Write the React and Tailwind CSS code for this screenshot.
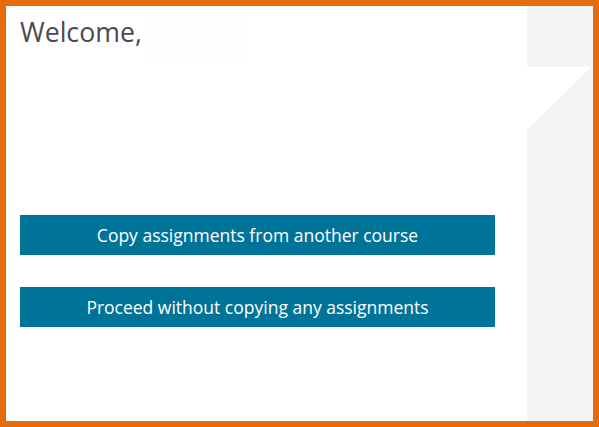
export default function App() {
    return (
        <div className="w-[599px] h-[427px] border-[6px] border-[#e46c0a] bg-white flex font-['Open_Sans',sans-serif]">

            {/* MAIN */}
            <div className="flex-1 pl-[14px] pt-[9px]">
                <div className="flex items-start">
                    <h1 className="text-[26.7px] leading-[33px] text-[#4a4a50]">
                        Welcome,
                    </h1>
                    {/* redacted name */}
                    <div className="ml-[4px] mt-[1px] w-[95px] h-[47px] bg-[#fdfdfd]"></div>
                </div>

                <div className="mt-[152px] w-[475px] flex flex-col gap-[32px]">
                    <button className="h-[40px] bg-[#007398] text-white text-[17.5px]">
                        Copy assignments from another course
                    </button>
                    <button className="h-[40px] bg-[#007398] text-white text-[17.5px]">
                        Proceed without copying any assignments
                    </button>
                </div>
            </div>

            {/* SIDE PANEL */}
            <div className="w-[66px] bg-[#f4f4f4]">
                <div className="h-[61px]"></div>
                <svg width="66" height="63" viewBox="0 0 66 63" className="block">
                    <polygon points="0,0 64,0 0,63" fill="#ffffff" />
                </svg>
            </div>

        </div>
    );
}
